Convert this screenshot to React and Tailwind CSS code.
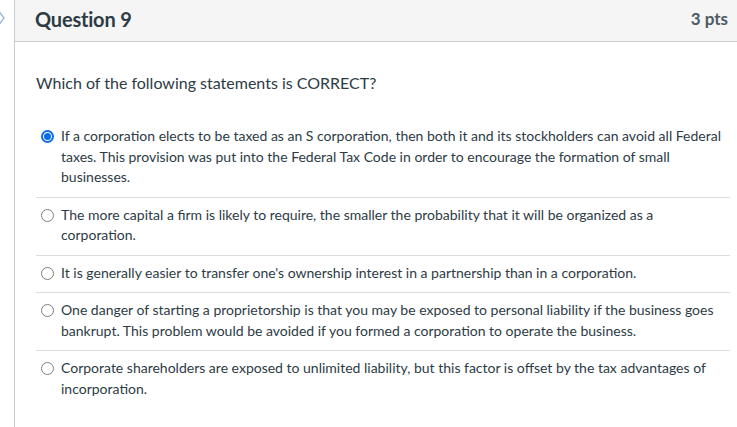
const ANSWERS = [
  {
    id: 1,
    text: 'If a corporation elects to be taxed as an S corporation, then both it and its stockholders can avoid all Federal taxes. This provision was put into the Federal Tax Code in order to encourage the formation of small businesses.',
    selected: true,
  },
  {
    id: 2,
    text: 'The more capital a firm is likely to require, the smaller the probability that it will be organized as a corporation.',
  },
  {
    id: 3,
    text: "It is generally easier to transfer one's ownership interest in a partnership than in a corporation.",
  },
  {
    id: 4,
    text: 'One danger of starting a proprietorship is that you may be exposed to personal liability if the business goes bankrupt. This problem would be avoided if you formed a corporation to operate the business.',
  },
  {
    id: 5,
    text: 'Corporate shareholders are exposed to unlimited liability, but this factor is offset by the tax advantages of incorporation.',
  },
];

function Radio({ checked }) {
  if (checked) {
    return (
      <span className="mt-[4px] flex h-[13px] w-[13px] shrink-0 items-center justify-center rounded-full border-2 border-[#0b6cf0] bg-white">
        <span className="h-[7px] w-[7px] rounded-full bg-[#0b6cf0]" />
      </span>
    );
  }
  return <span className="mt-[4px] h-[13px] w-[13px] shrink-0 rounded-full border border-[#808080] bg-white" />;
}

export default function App() {
  return (
    <div
      className="flex h-[427px] w-[737px] overflow-hidden bg-white text-[#2d3b45]"
      style={{ fontFamily: 'Lato, "Liberation Sans", sans-serif' }}
    >
      <div className="relative w-[14px] shrink-0">
        <svg className="absolute left-[-4px] top-[9px]" width="10" height="18" viewBox="0 0 10 18" fill="none">
          <path d="M2 1 L8 9 L2 17" stroke="#8cb8e0" strokeWidth="1.3" />
        </svg>
      </div>
      <div className="flex-1 border-l border-[#c7cdd1]">
        <div className="flex h-[42px] items-center justify-between border-b border-[#c7cdd1] bg-[#f5f5f5] pb-[3px] pl-[20px] pr-[9px]">
          <h2 className="text-[20px] font-bold tracking-[-0.2px]">Question 9</h2>
          <span className="text-[17px] font-bold text-[#4b5a66]">3 pts</span>
        </div>
        <div className="pl-[21px] pr-[7px]">
          <p className="mt-[29px] text-[16px] leading-[24px]">Which of the following statements is CORRECT?</p>
          <div className="mt-[24px]">
            {ANSWERS.map((a, i) => (
              <div
                key={a.id}
                className={`flex gap-[7px] pl-[5px] pb-[9px] pt-[7px] ${i < ANSWERS.length - 1 ? 'border-b border-[#dadde0]' : ''}`}
              >
                <Radio checked={a.selected} />
                <p className="text-[14px] leading-[20.5px]">{a.text}</p>
              </div>
            ))}
          </div>
        </div>
      </div>
    </div>
  );
}
